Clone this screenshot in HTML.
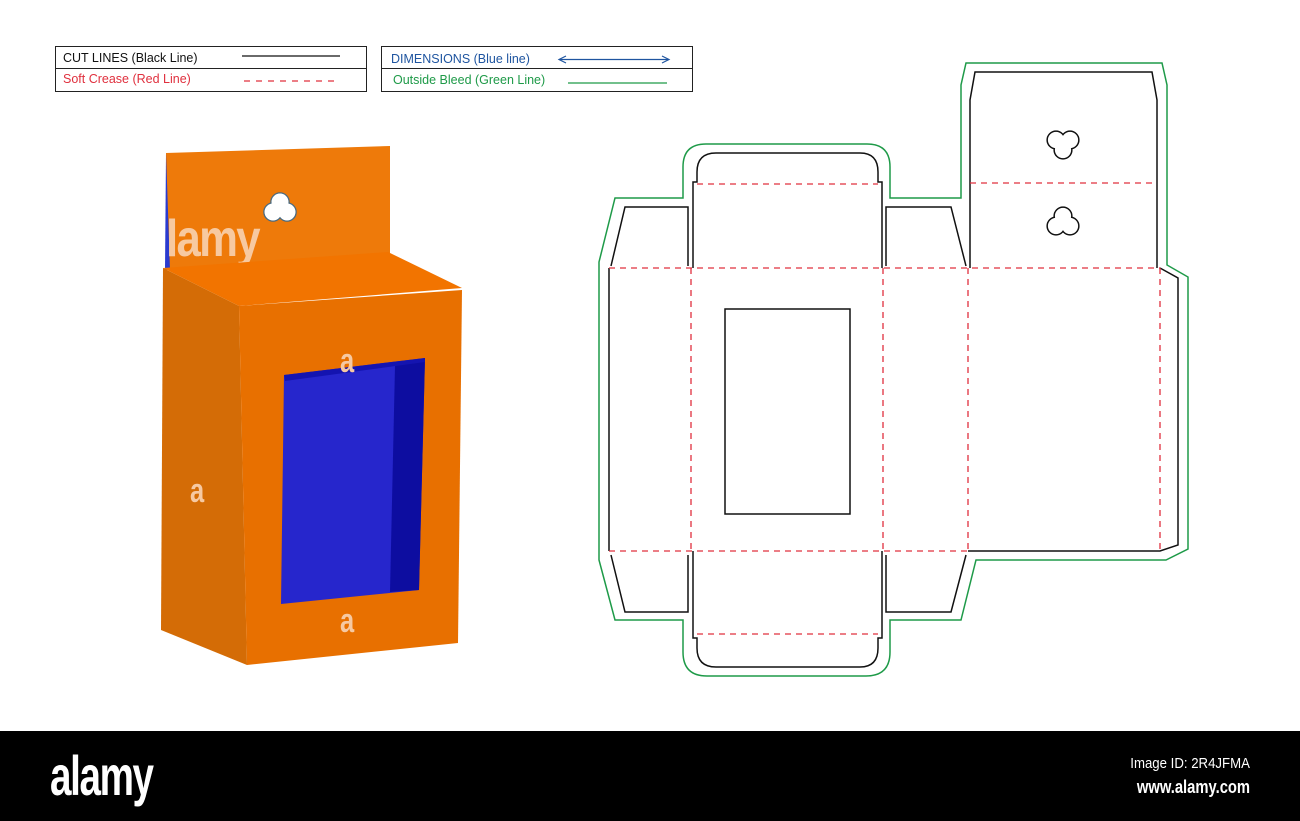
<!DOCTYPE html>
<html><head><style>
body{margin:0;width:1300px;height:821px;background:#fff;position:relative;overflow:hidden;font-family:"Liberation Sans",Arial,sans-serif}
.f{position:absolute;left:0;top:731px;width:1300px;height:90px;background:#000}
</style></head><body>
<svg width="1300" height="731" style="position:absolute;left:0;top:0" xmlns="http://www.w3.org/2000/svg">
<g fill="none" stroke="#222" stroke-width="1">
<rect x="55.5" y="46.5" width="311" height="45"/><line x1="55" y1="68.5" x2="366" y2="68.5"/>
<rect x="381.5" y="46.5" width="311" height="45"/><line x1="381" y1="68.5" x2="692" y2="68.5"/>
</g>
<g font-size="12.5" font-family="Liberation Sans,Arial,sans-serif">
<text x="63" y="62" fill="#111">CUT LINES (Black Line)</text>
<text x="63" y="83" fill="#e0303e">Soft Crease (Red Line)</text>
<text x="391" y="63" fill="#1f55a0">DIMENSIONS (Blue line)</text>
<text x="393" y="84" fill="#1e9a48">Outside Bleed (Green Line)</text>
</g>
<line x1="242" y1="56" x2="340" y2="56" stroke="#111" stroke-width="1.3"/>
<line x1="244" y1="81" x2="340" y2="81" stroke="#e0303e" stroke-width="1.3" stroke-dasharray="6,6"/>
<line x1="560" y1="59.5" x2="668" y2="59.5" stroke="#1f55a0" stroke-width="1.2"/>
<path d="M566 56 L559 59.5 L566 63 M662 56 L669 59.5 L662 63" stroke="#1f55a0" fill="none" stroke-width="1.2"/>
<line x1="568" y1="83" x2="667" y2="83" stroke="#1e9a48" stroke-width="1.2"/>

<polygon points="166,153 390,146 390,254 166,270" fill="#ee7a0a"/>
<polygon points="166,153 170,270 165,270" fill="#2a3bd0"/>
<text x="0" y="0" font-size="52" font-weight="bold" fill="#f7c9a0" transform="translate(166,256) scale(0.84,1)" letter-spacing="-2">lamy</text>
<g stroke="#4a6a80" stroke-width="1.6" fill="#fff">
<circle cx="280" cy="202" r="9"/><circle cx="273" cy="212" r="9"/><circle cx="287" cy="212" r="9"/></g>
<g fill="#fff"><circle cx="280" cy="202" r="8.5"/><circle cx="273" cy="212" r="8.5"/><circle cx="287" cy="212" r="8.5"/><circle cx="280" cy="209" r="6"/></g>
<polygon points="163,268 388,252 462,288 239,306" fill="#f27400"/>
<polygon points="163,268 239,306 247,665 161,630" fill="#d46c06"/>
<polygon points="239,306 462,290 458,643 247,665" fill="#e87000"/>
<polygon points="284,375 425,358 419,590 281,604" fill="#2626cc"/>
<polygon points="395,366 425,358 419,590 390,592" fill="#0d0da0"/>
<polygon points="284,375 425,358 425,362 285,381" fill="#1414b0"/>
<g fill="#f6c9a2" font-weight="bold" font-size="34">
<text transform="translate(340,372) scale(0.75,1)">a</text><text transform="translate(190,502) scale(0.75,1)">a</text><text transform="translate(340,632) scale(0.75,1)">a</text></g>

<path d="M599,262 L615,198 L683,198 L683,167 Q683,144 706,144 L867,144 Q890,144 890,167 L890,198 L961,198 L961,85 L966,63 L1162,63 L1167,85 L1167,265 L1188,277 L1188,549 L1166,560 L976,560 L961,620 L890,620 L890,652 Q890,676 866,676 L707,676 Q683,676 683,652 L683,620 L615,620 L599,560 Z" fill="none" stroke="#1e9a48" stroke-width="1.5"/>
<g fill="none" stroke="#111" stroke-width="1.5">
<path d="M609,268 L609,551"/>
<path d="M611,266 L625,207 L688,207 L688,266"/>
<path d="M693,268 L693,182 L697,182 L697,172 Q697,153 716,153 L860,153 Q878,153 878,172 L878,182 L882,182 L882,268"/>
<path d="M886,266 L886,207 L951,207 L966,266"/>
<path d="M970,268 L970,100 L975,72 L1152,72 L1157,100 L1157,268"/>
<path d="M1160,268 L1178,278 L1178,545 L1160,551 L968,551"/>
<path d="M611,555 L625,612 L688,612 L688,555"/>
<path d="M693,551 L693,638 L697,638 L697,648 Q697,667 716,667 L860,667 Q878,667 878,648 L878,638 L882,638 L882,551"/>
<path d="M886,555 L886,612 L951,612 L966,555"/>
<rect x="725" y="309" width="125" height="205"/>
</g>
<g stroke="#111" stroke-width="2.2" fill="#fff">
<circle cx="1056" cy="140" r="8.5"/><circle cx="1070" cy="140" r="8.5"/><circle cx="1063" cy="150" r="8.5"/>
<circle cx="1063" cy="216" r="8.5"/><circle cx="1056" cy="226" r="8.5"/><circle cx="1070" cy="226" r="8.5"/></g>
<g fill="#fff">
<circle cx="1056" cy="140" r="8.1"/><circle cx="1070" cy="140" r="8.1"/><circle cx="1063" cy="150" r="8.1"/><circle cx="1063" cy="143" r="6"/>
<circle cx="1063" cy="216" r="8.1"/><circle cx="1056" cy="226" r="8.1"/><circle cx="1070" cy="226" r="8.1"/><circle cx="1063" cy="223" r="6"/></g>
<g stroke="#e0303e" stroke-width="1.3" stroke-dasharray="6,5" fill="none">
<path d="M609,268 L1160,268"/><path d="M609,551 L968,551"/>
<path d="M697,184 L878,184"/><path d="M697,634 L878,634"/>
<path d="M970,183 L1157,183"/>
<path d="M691,268 L691,551"/><path d="M883,268 L883,551"/><path d="M968,268 L968,551"/><path d="M1160,268 L1160,551"/>
</g>
</svg>
<div class="f">
<div style="position:absolute;left:50px;top:12px;color:#fff;font-size:56px;font-weight:bold;letter-spacing:-2px;transform:scale(0.69,1);transform-origin:left top">alamy</div>
<div style="position:absolute;right:50px;top:24px;color:#fff;font-size:15px;white-space:nowrap;transform:scale(0.88,1);transform-origin:right top">Image ID: 2R4JFMA</div>
<div style="position:absolute;right:50px;top:46px;color:#fff;font-size:18px;font-weight:bold;white-space:nowrap;transform:scale(0.82,1);transform-origin:right top">www.alamy.com</div>
</div>
</body></html>
